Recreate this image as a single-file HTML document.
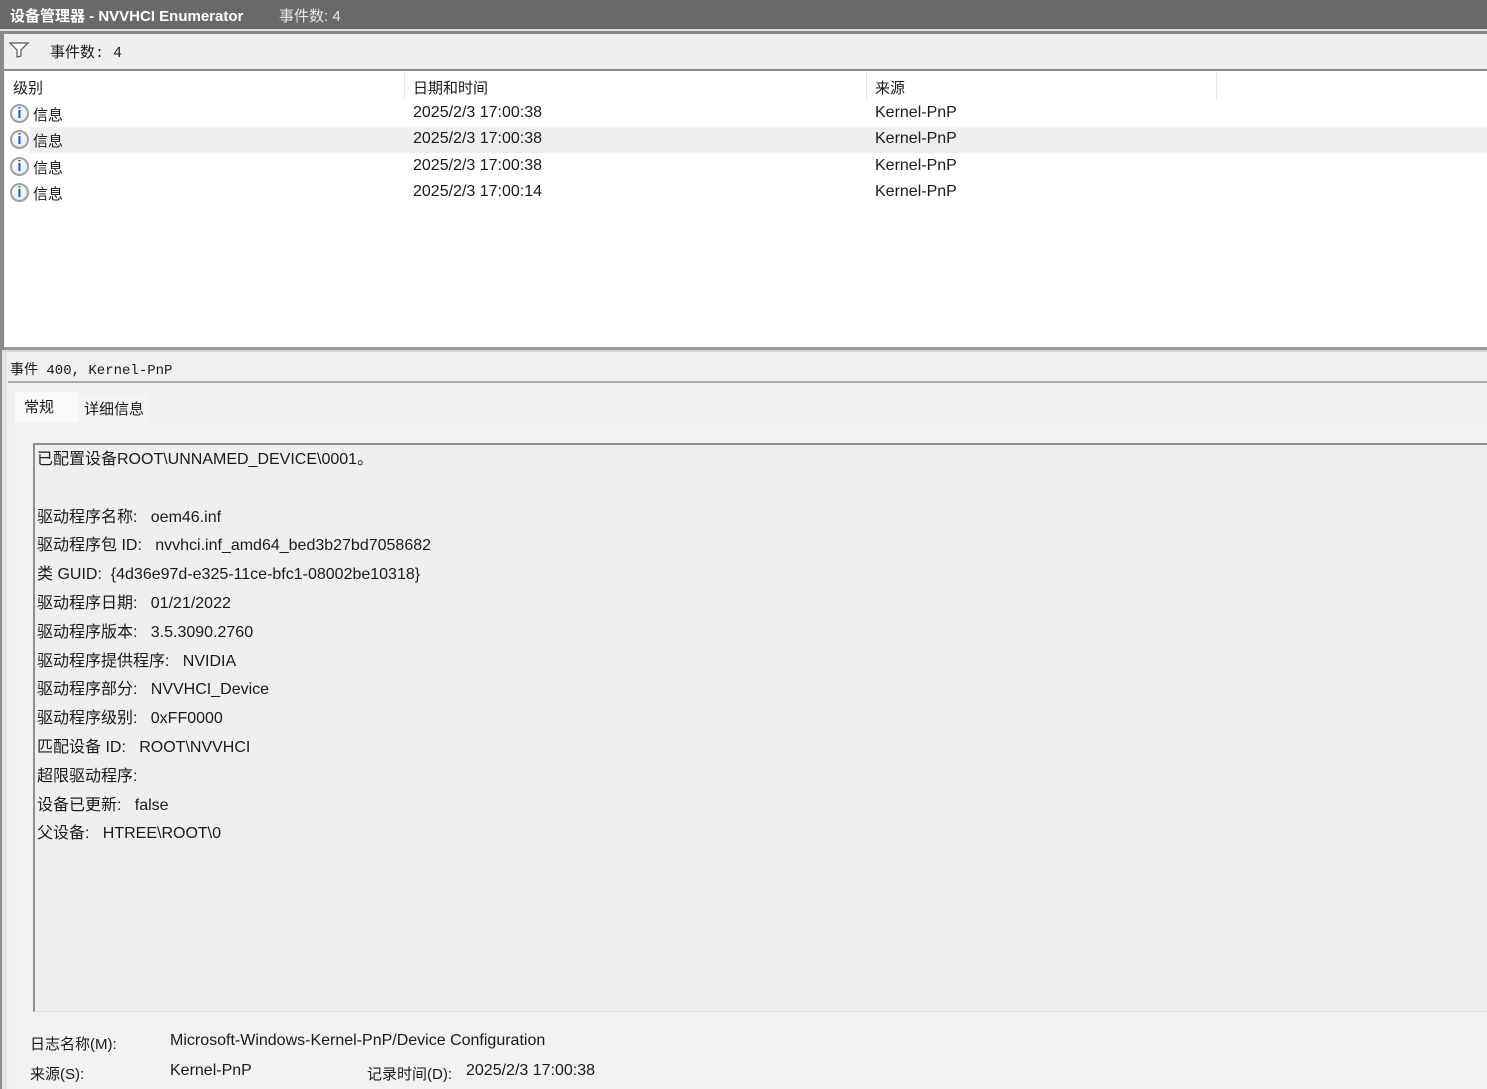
<!DOCTYPE html>
<html><head><meta charset="utf-8"><style>
*{margin:0;padding:0;box-sizing:border-box}
body{width:1487px;height:1089px;overflow:hidden;background:#f0f0f0;font-family:"Liberation Sans","Noto Sans CJK SC",sans-serif;font-size:15px;color:#1a1a1a;position:relative}
.a{position:absolute;white-space:nowrap}
.r{font-size:16px}
.mono{font-family:"Liberation Mono","Noto Sans CJK SC",monospace;font-size:14px}
.ic{position:absolute;width:19px;height:19px;border-radius:50%;border:2px solid #a0a0a0;background:radial-gradient(circle at 40% 35%,#fff,#d9e6f5);left:10px}
.ic::after{content:"i";position:absolute;left:0;right:0;top:-1px;text-align:center;font:bold 15px "Liberation Sans",sans-serif;color:#1b5fbf}
</style></head><body>
<div class="a" style="left:0;top:0;width:1487px;height:29px;background:#696969"></div>
<div class="a" style="left:10px;top:5px;color:#fff;font-weight:bold;font-size:15px">设备管理器 - NVVHCI Enumerator</div>
<div class="a" style="left:279px;top:5px;color:#e8e8e8;font-size:15px">事件数: 4</div>
<div class="a" style="left:0;top:29px;width:1487px;height:2px;background:#dcdcdc"></div>
<div class="a" style="left:0;top:31px;width:1487px;height:3px;background:#8a8a8a"></div>
<div class="a" style="left:0;top:34px;width:4px;height:1055px;background:#8a8a8a"></div>
<div class="a" style="left:4px;top:34px;width:1483px;height:35px;background:#efefef"></div>
<svg class="a" style="left:9px;top:42px" width="20" height="16" viewBox="0 0 20 16"><path d="M1 1H19L12 8V14L8 15V8Z" fill="#fff" stroke="#555" stroke-width="1.2"/></svg>
<div class="a mono" style="left:50px;top:41px;font-size:15px">事件数: 4</div>
<div class="a" style="left:4px;top:69px;width:1483px;height:2px;background:#8a8a8a"></div>
<div class="a" style="left:5px;top:71px;width:1482px;height:276px;background:#fff"></div>
<div class="a" style="left:404px;top:72px;width:1px;height:28px;background:#e6e6e6"></div>
<div class="a" style="left:866px;top:72px;width:1px;height:28px;background:#e6e6e6"></div>
<div class="a" style="left:1216px;top:72px;width:1px;height:28px;background:#e6e6e6"></div>
<div class="a" style="left:13px;top:77px">级别</div>
<div class="a" style="left:413px;top:77px">日期和时间</div>
<div class="a" style="left:875px;top:77px">来源</div>
<div class="a" style="left:30px;top:127px;width:1457px;height:26px;background:#efefef"></div>
<div class="ic" style="top:104px"></div><div class="a" style="left:33px;top:104px">信息</div><div class="a r" style="left:413px;top:104px">2025/2/3 17:00:38</div><div class="a r" style="left:875px;top:104px">Kernel-PnP</div>
<div class="ic" style="top:130px"></div><div class="a" style="left:33px;top:130px">信息</div><div class="a r" style="left:413px;top:130px">2025/2/3 17:00:38</div><div class="a r" style="left:875px;top:130px">Kernel-PnP</div>
<div class="ic" style="top:157px"></div><div class="a" style="left:33px;top:157px">信息</div><div class="a r" style="left:413px;top:157px">2025/2/3 17:00:38</div><div class="a r" style="left:875px;top:157px">Kernel-PnP</div>
<div class="ic" style="top:183px"></div><div class="a" style="left:33px;top:183px">信息</div><div class="a r" style="left:413px;top:183px">2025/2/3 17:00:14</div><div class="a r" style="left:875px;top:183px">Kernel-PnP</div>
<div class="a" style="left:4px;top:347px;width:1483px;height:3px;background:#9a9a9a"></div>
<div class="a" style="left:0;top:350px;width:1487px;height:2px;background:#d8d8d8"></div>
<div class="a" style="left:0;top:350px;width:2px;height:739px;background:#8a8a8a"></div>
<div class="a" style="left:2px;top:352px;width:5px;height:737px;background:#e2e2e2"></div>
<div class="a mono" style="left:10px;top:359px;font-size:14px">事件 400, Kernel-PnP</div>
<div class="a" style="left:8px;top:381px;width:1479px;height:2px;background:#a8a8a8"></div>
<div class="a" style="left:15px;top:392px;width:63px;height:31px;background:#f9f9f9"></div>
<div class="a" style="left:78px;top:394px;width:71px;height:28px;background:#f3f3f3"></div>
<div class="a" style="left:24px;top:396px">常规</div>
<div class="a" style="left:84px;top:398px">详细信息</div>
<div class="a" style="left:18px;top:422px;width:1469px;height:667px;background:#f2f2f2"></div>
<div class="a" style="left:33px;top:443px;width:1454px;height:569px;border-left:2px solid #8f8f8f;border-top:2px solid #8f8f8f;border-bottom:1px solid #e0e0e0;background:#efefef"></div>
<div class="a" style="left:37px;top:446px;line-height:28.8px;font-size:16px">
已配置设备ROOT\UNNAMED_DEVICE\0001。<br><br>
驱动程序名称:&nbsp;&nbsp; oem46.inf<br>
驱动程序包 ID:&nbsp;&nbsp; nvvhci.inf_amd64_bed3b27bd7058682<br>
类 GUID:&nbsp; {4d36e97d-e325-11ce-bfc1-08002be10318}<br>
驱动程序日期:&nbsp;&nbsp; 01/21/2022<br>
驱动程序版本:&nbsp;&nbsp; 3.5.3090.2760<br>
驱动程序提供程序:&nbsp;&nbsp; NVIDIA<br>
驱动程序部分:&nbsp;&nbsp; NVVHCI_Device<br>
驱动程序级别:&nbsp;&nbsp; 0xFF0000<br>
匹配设备 ID:&nbsp;&nbsp; ROOT\NVVHCI<br>
超限驱动程序:<br>
设备已更新:&nbsp;&nbsp; false<br>
父设备:&nbsp;&nbsp; HTREE\ROOT\0</div>
<div class="a" style="left:30px;top:1033px">日志名称(M):</div>
<div class="a r" style="left:170px;top:1032px">Microsoft-Windows-Kernel-PnP/Device Configuration</div>
<div class="a" style="left:30px;top:1063px">来源(S):</div>
<div class="a r" style="left:170px;top:1062px">Kernel-PnP</div>
<div class="a" style="left:367px;top:1063px">记录时间(D):</div>
<div class="a r" style="left:466px;top:1062px">2025/2/3 17:00:38</div>
</body></html>
